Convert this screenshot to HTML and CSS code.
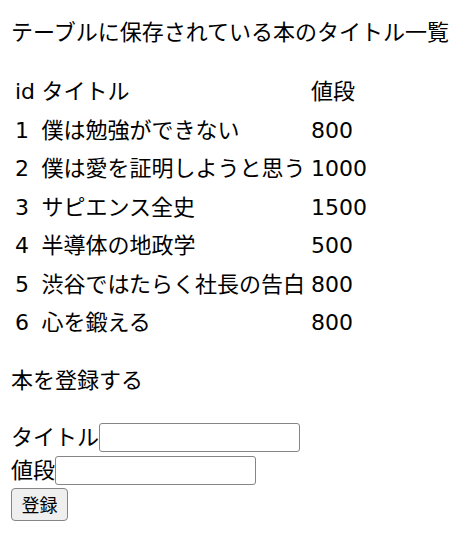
FILE: index.html
```html
<!DOCTYPE html>
<html lang="ja">
<head>
  <meta charset="UTF-8" />
  <meta name="viewport" content="width=device-width, initial-scale=1.0"/>
  <title>本の一覧</title>
  <link rel="stylesheet" href="styles.css">
</head>
<body>
  <p class="page-title">テーブルに保存されている本のタイトル一覧</p>

  <!-- 本の一覧 -->
  <table class="books">
    <tr>
      <th class="col-id">id</th>
      <th>タイトル</th>
      <th>値段</th>
    </tr>
    <tr><td class="col-id">1</td><td>僕は勉強ができない</td><td>800</td></tr>
    <tr><td class="col-id">2</td><td>僕は愛を証明しようと思う</td><td>1000</td></tr>
    <tr><td class="col-id">3</td><td>サピエンス全史</td><td>1500</td></tr>
    <tr><td class="col-id">4</td><td>半導体の地政学</td><td>500</td></tr>
    <tr><td class="col-id">5</td><td>渋谷ではたらく社長の告白</td><td>800</td></tr>
    <tr><td class="col-id">6</td><td>心を鍛える</td><td>800</td></tr>
  </table>

  <!-- 登録フォーム -->
  <p class="form-title">本を登録する</p>
  <form class="book-form" onsubmit="return false">
    <div class="form-row">
      <label for="title">タイトル</label><input type="text" id="title" name="title">
    </div>
    <div class="form-row">
      <label for="price">値段</label><input type="text" id="price" name="price">
    </div>
    <button type="submit" class="submit-btn">登録</button>
  </form>
</body>
</html>
```

FILE: styles.css
```css
body {
  margin: 0;
  padding: 16px 11px;
  background: #fff;
  color: #000;
  font-family: "DejaVu Sans", "Noto Sans CJK JP", sans-serif;
  font-size: 22px;
  line-height: 33px;
}

.page-title {
  margin: 0 0 22px;
}

.books {
  border-spacing: 3px;
  margin-left: -0.25px;
}

.books th,
.books td {
  padding: 1.25px;
  font-weight: normal;
  text-align: left;
  vertical-align: middle;
}

.books .col-id {
  width: 21px;
}

.form-title {
  margin: 20px 0 24px;
}

.book-form {
  margin: 0;
}

.form-row {
  display: flex;
  align-items: center;
  height: 33.5px;
}

.form-row input {
  box-sizing: border-box;
  width: 201px;
  height: 29px;
  margin: 0;
  padding: 1px 3px;
  border: 1px solid #858585;
  border-radius: 3px;
  background: #fff;
  font-size: 18px;
}

.submit-btn {
  box-sizing: border-box;
  width: 57px;
  height: 33px;
  margin: 0;
  padding: 0;
  border: 1px solid #858585;
  border-radius: 4px;
  background: #efefef;
  color: #000;
  font-family: "Noto Sans CJK JP", sans-serif;
  font-size: 18px;
  line-height: 31px;
}
```
